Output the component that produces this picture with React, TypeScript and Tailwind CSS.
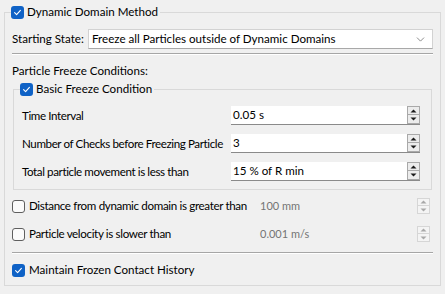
import { ChevronDown } from 'lucide-react';

function Check({ checked }: { checked: boolean }) {
  if (checked) {
    return (
      <span className="flex h-[13px] w-[13px] shrink-0 items-center justify-center rounded-[3px] bg-[#0f62c6]">
        <svg width="9" height="9" viewBox="0 0 9 9" fill="none">
          <path d="M1.6 4.7 L3.6 6.6 L7.4 2.4" stroke="white" strokeWidth="1.1" strokeLinecap="round" strokeLinejoin="round" />
        </svg>
      </span>
    );
  }
  return <span className="h-[13px] w-[13px] shrink-0 rounded-[3px] border border-[#5f5f5f] bg-[#fbfbfb]" />;
}

function Arrow({ up, disabled }: { up: boolean; disabled?: boolean }) {
  return (
    <span
      className={`flex h-1/2 w-full items-center justify-center border ${
        disabled ? 'border-[#d6d6d6] bg-[#f4f4f4]' : 'border-[#a9a9a9] bg-[#ececec]'
      } ${up ? '' : 'border-t-0'}`}
    >
      <svg width="7" height="4" viewBox="0 0 7 4">
        <path d={up ? 'M0.5 3.5 L3.5 0.5 L6.5 3.5 Z' : 'M0.5 0.5 L3.5 3.5 L6.5 0.5 Z'} fill={disabled ? '#a8a8a8' : '#1a1a1a'} />
      </svg>
    </span>
  );
}

function SpinBox({ value }: { value: string }) {
  return (
    <div className="flex h-[19px] w-[189px] shrink-0 items-center bg-white border-b border-[#8a8a8a]">
      <span className="flex-1 pl-[2px]">{value}</span>
      <span className="flex h-[18px] w-[13px] flex-col">
        <Arrow up />
        <Arrow up={false} />
      </span>
    </div>
  );
}

function DisabledSpin({ value }: { value: string }) {
  return (
    <div className="flex h-[20px] w-[170px] shrink-0 items-center">
      <span className="flex-1 text-[11px] text-[#747474]">{value}</span>
      <span className="flex h-[16px] w-[13px] flex-col">
        <Arrow up disabled />
        <Arrow up={false} disabled />
      </span>
    </div>
  );
}

const rows = [
  { label: 'Time Interval', value: '0.05 s' },
  { label: 'Number of Checks before Freezing Particle', value: '3' },
  { label: 'Total particle movement is less than', value: '15 % of R min' },
];

export default function App() {
  return (
    <div className="h-[294px] w-[445px] overflow-hidden whitespace-nowrap bg-[#f0f0f0] pt-[4px] text-[11.6px] leading-[16px] text-black [font-family:Lato,'Noto_Sans',sans-serif]">
      <fieldset className="ml-[4px] w-[437px] border border-[#d9d9d9] px-[7px] pb-[7px]">
        <legend className="-ml-[1px] flex h-[16px] items-center gap-[3px] pr-[2px]">
          <Check checked />
          <span>Dynamic Domain Method</span>
        </legend>

        <div className="mt-[9px] flex h-[20px] items-center">
          <span className="w-[76px] shrink-0">Starting State:</span>
          <div className="flex h-[20px] flex-1 items-center border border-[#d2d2d2] border-b-[#a8a8a8] bg-white pl-[3px] pr-[5px]">
            <span className="flex-1">Freeze all Particles outside of Dynamic Domains</span>
            <ChevronDown size={13} strokeWidth={1.4} color="#6a6a6a" />
          </div>
        </div>

        <div className="mt-[4px] border-t border-[#a6a6a6] border-b border-b-white" />

        <div className="mt-[8px] h-[16px]">Particle Freeze Conditions:</div>

        <fieldset className="mx-[1px] mt-[2px] border border-[#d9d9d9] pl-[8px] pr-[11px] pb-[8px]">
          <legend className="-ml-[2px] flex h-[16px] items-center gap-[3px] pr-[2px]">
            <Check checked />
            <span>Basic Freeze Condition</span>
          </legend>
          <div className="mt-[9px] flex flex-col gap-[9px]">
            {rows.map((r) => (
              <div key={r.label} className="flex h-[19px] items-center">
                <span className="w-[209px] shrink-0 tracking-[-0.4px]">{r.label}</span>
                <SpinBox value={r.value} />
              </div>
            ))}
          </div>
        </fieldset>

        <div className="mt-[6px] flex flex-col gap-[8px]">
          <div className="flex h-[20px] items-center">
            <Check checked={false} />
            <span className="ml-[4px] w-[231px] shrink-0 tracking-[-0.35px]">Distance from dynamic domain is greater than</span>
            <DisabledSpin value="100 mm" />
          </div>
          <div className="flex h-[20px] items-center">
            <Check checked={false} />
            <span className="ml-[4px] w-[231px] shrink-0 tracking-[-0.35px]">Particle velocity is slower than</span>
            <DisabledSpin value="0.001 m/s" />
          </div>
        </div>

        <div className="mt-[8px] border-t border-[#a6a6a6] border-b border-b-white" />

        <div className="mt-[8px] flex h-[16px] items-center gap-[4px]">
          <Check checked />
          <span>Maintain Frozen Contact History</span>
        </div>
      </fieldset>
    </div>
  );
}
